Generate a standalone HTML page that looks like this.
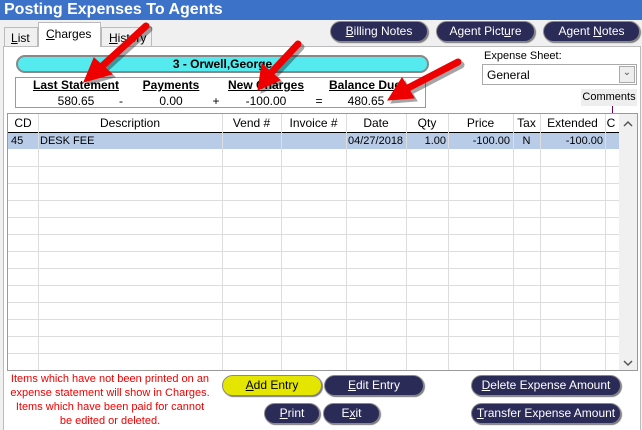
<!DOCTYPE html><html><head><style>
*{box-sizing:border-box;margin:0;padding:0}
body{width:642px;height:430px;overflow:hidden;background:#f0f0f0;font-family:"Liberation Sans",sans-serif;font-size:11px;position:relative}
.a{position:absolute}
.btn{position:absolute;background:#2b2b58;color:#fff;border-radius:11px;text-align:center;font-size:12px;box-shadow:1px 1px 1px #777;border:1px solid #888}
.c{position:absolute;top:0;text-align:center}
u{text-decoration:underline}
</style></head><body>
<div class="a" style="left:0;top:0;width:642px;height:20px;background:#3c72c8"></div>
<div class="a" style="left:4px;top:0;color:#fff;font-weight:bold;font-size:16px;line-height:19px">Posting Expenses To Agents</div>
<div class="a" style="left:3px;top:46px;width:638px;height:384px;border:1px solid #bbb;border-bottom:none;background:#fff"></div>
<div class="a" style="left:4px;top:27px;width:34px;height:20px;border:1px solid #bbb;background:#f0f0f0;padding:3px 0 0 6px;font-size:12px"><u>L</u>ist</div>
<div class="a" style="left:38px;top:22px;width:63px;height:25px;border:1px solid #bbb;border-bottom:none;background:#fff;padding:4px 0 0 7px;font-size:12px"><u>C</u>harges</div>
<div class="a" style="left:101px;top:27px;width:51px;height:20px;border:1px solid #bbb;background:#f0f0f0;padding:3px 0 0 7px;font-size:12px"><u>H</u>istory</div>
<div class="btn" style="left:330px;top:21px;width:98px;height:21px;line-height:19px"><u>B</u>illing Notes</div>
<div class="btn" style="left:436px;top:21px;width:99px;height:21px;line-height:19px">Agent Pict<u>u</u>re</div>
<div class="btn" style="left:543px;top:21px;width:97px;height:21px;line-height:19px">Agent <u>N</u>otes</div>
<div class="a" style="left:16px;top:55px;width:413px;height:18px;background:#55eaee;border:2px solid #888;border-radius:9px;text-align:center;font-weight:bold;font-size:12px;line-height:14px">3 - Orwell,George</div>
<div class="a" style="left:15px;top:77px;width:411px;height:31px;border:1px solid #999;font-size:12px">
<div class="c" style="left:10px;width:100px;font-weight:bold"><u>Last Statement</u></div>
<div class="c" style="left:120px;width:70px;font-weight:bold"><u>Payments</u></div>
<div class="c" style="left:205px;width:90px;font-weight:bold"><u>New Charges</u></div>
<div class="c" style="left:309px;width:80px;font-weight:bold"><u>Balance Due</u></div>
<div class="c" style="top:16px;left:30px;width:60px">580.65</div>
<div class="c" style="top:16px;left:100px;width:10px">-</div>
<div class="c" style="top:16px;left:130px;width:50px">0.00</div>
<div class="c" style="top:16px;left:195px;width:10px">+</div>
<div class="c" style="top:16px;left:220px;width:60px">-100.00</div>
<div class="c" style="top:16px;left:298px;width:10px">=</div>
<div class="c" style="top:16px;left:320px;width:60px">480.65</div>
</div>
<div class="a" style="left:484px;top:50px;font-size:11px">Expense Sheet:</div>
<div class="a" style="left:482px;top:64px;width:155px;height:21px;border:1px solid #aaa;background:#fff;padding:3px 4px;font-size:12px">General</div>
<div class="a" style="left:619px;top:66px;width:16px;height:17px;border:1px solid #aaa;background:#eee;text-align:center;font-size:10px;color:#555">&#8964;</div>
<div class="a" style="left:581px;top:89px;width:56px;height:17px;background:#eee;text-align:center;font-size:11px;line-height:17px">Comments</div>
<div class="a" style="left:612px;top:106px;width:1px;height:8px;background:#606"></div>
<div class="a" style="left:7px;top:113px;width:631px;height:258px;border:1px solid #999;background:#fff"></div>
<svg class="a" style="left:0;top:0" width="642" height="430">
<g stroke="#ddd" stroke-width="1">
<line x1="8" y1="166.5" x2="619" y2="166.5"/><line x1="8" y1="183.5" x2="619" y2="183.5"/><line x1="8" y1="200.5" x2="619" y2="200.5"/><line x1="8" y1="217.5" x2="619" y2="217.5"/><line x1="8" y1="234.5" x2="619" y2="234.5"/><line x1="8" y1="251.5" x2="619" y2="251.5"/><line x1="8" y1="268.5" x2="619" y2="268.5"/><line x1="8" y1="285.5" x2="619" y2="285.5"/><line x1="8" y1="302.5" x2="619" y2="302.5"/><line x1="8" y1="319.5" x2="619" y2="319.5"/><line x1="8" y1="336.5" x2="619" y2="336.5"/><line x1="8" y1="353.5" x2="619" y2="353.5"/>
</g>
<rect x="8" y="133" width="611" height="16" fill="#b8cce8"/>
<line x1="8" y1="132.5" x2="619" y2="132.5" stroke="#000"/>
<g stroke="#ddd"><line x1="38.5" y1="114" x2="38.5" y2="370"/><line x1="222.5" y1="114" x2="222.5" y2="370"/><line x1="281.5" y1="114" x2="281.5" y2="370"/><line x1="346.5" y1="114" x2="346.5" y2="370"/><line x1="406.5" y1="114" x2="406.5" y2="370"/><line x1="448.5" y1="114" x2="448.5" y2="370"/><line x1="513.5" y1="114" x2="513.5" y2="370"/><line x1="540.5" y1="114" x2="540.5" y2="370"/><line x1="605.5" y1="114" x2="605.5" y2="370"/></g>
<rect x="619" y="114" width="18" height="256" fill="#f0f0f0"/>
<path d="M624 126l4-4 4 4M624 361l4 4 4-4" stroke="#555" stroke-width="1.5" fill="none"/>
<g fill="#e00" stroke="#e00" stroke-linecap="round">
<g opacity="0.35" transform="translate(3,3)" fill="#000" stroke="#000"><line x1="146" y1="26" x2="100" y2="68" stroke-width="7"/><polygon points="84,82 94,58 112,74"/><line x1="298" y1="44" x2="270" y2="74" stroke-width="7"/><polygon points="258,90 262,64 280,80"/><line x1="458" y1="62" x2="408" y2="88" stroke-width="7"/><polygon points="388,100 402,78 414,98"/></g>
<line x1="146" y1="26" x2="100" y2="68" stroke-width="7"/><polygon points="84,82 94,58 112,74"/>
<line x1="298" y1="44" x2="270" y2="74" stroke-width="7"/><polygon points="258,90 262,64 280,80"/>
<line x1="458" y1="62" x2="408" y2="88" stroke-width="7"/><polygon points="388,100 402,78 414,98"/>
</g>
</svg>
<div class="a" style="left:8px;top:114px;width:611px;height:18px;font-size:12px;line-height:18px">
<div class="c" style="left:0;width:30px">CD</div><div class="c" style="left:30px;width:184px">Description</div><div class="c" style="left:214px;width:59px">Vend #</div><div class="c" style="left:273px;width:65px">Invoice #</div><div class="c" style="left:338px;width:60px">Date</div><div class="c" style="left:398px;width:42px">Qty</div><div class="c" style="left:440px;width:65px">Price</div><div class="c" style="left:505px;width:27px">Tax</div><div class="c" style="left:532px;width:65px">Extended</div><div class="c" style="left:598px;width:10px">C</div></div>
<div class="a" style="left:8px;top:133px;width:611px;height:16px;font-size:11px;line-height:16px">
<div class="a" style="left:3px">45</div><div class="a" style="left:32px">DESK FEE</div><div class="a" style="left:340px">04/27/2018</div><div class="a" style="left:398px;width:40px;text-align:right">1.00</div><div class="a" style="left:440px;width:62px;text-align:right">-100.00</div><div class="c" style="left:505px;width:27px">N</div><div class="a" style="left:532px;width:63px;text-align:right">-100.00</div></div>
<div class="a" style="left:4px;top:372px;width:212px;text-align:center;color:#e00;font-size:11px;line-height:14px;white-space:nowrap">Items which have not been printed on an<br>expense statement will show in Charges.<br>Items which have been paid for cannot<br>be edited or deleted.</div>
<div class="btn" style="left:222px;top:375px;width:100px;height:21px;line-height:19px;background:#e5e600;color:#000"><u>A</u>dd Entry</div>
<div class="btn" style="left:324px;top:375px;width:100px;height:21px;line-height:19px"><u>E</u>dit Entry</div>
<div class="btn" style="left:264px;top:403px;width:56px;height:21px;line-height:19px"><u>P</u>rint</div>
<div class="btn" style="left:323px;top:403px;width:57px;height:21px;line-height:19px">E<u>x</u>it</div>
<div class="btn" style="left:471px;top:375px;width:150px;height:21px;line-height:19px"><u>D</u>elete Expense Amount</div>
<div class="btn" style="left:471px;top:403px;width:150px;height:21px;line-height:19px"><u>T</u>ransfer Expense Amount</div>
</body></html>
